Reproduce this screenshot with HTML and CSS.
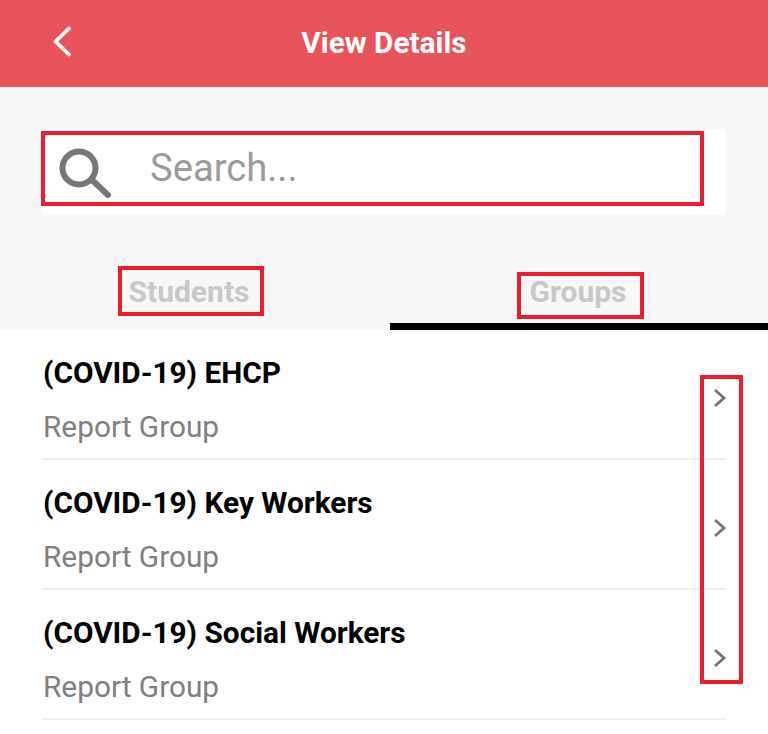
FILE: index.html
```html
<!DOCTYPE html>
<html lang="en">
<head>
<meta charset="utf-8">
<title>View Details</title>
<link rel="stylesheet" href="styles.css">
</head>
<body>
<div class="screen">
  <header class="topbar">
    <svg class="back" width="20" height="32" viewBox="0 0 20 32"><path d="M17 2.5 3.5 15.5 17 28.5" fill="none" stroke="#fff" stroke-width="3.8" stroke-linecap="round" stroke-linejoin="round"/></svg>
    <h1 class="title">View Details</h1>
  </header>
  <section class="search-wrap">
    <div class="search">
      <svg class="search-icon" width="54" height="52" viewBox="0 0 54 52"><circle cx="21" cy="21" r="16.5" fill="none" stroke="#777" stroke-width="6"/><path d="M34 33 50 48" fill="none" stroke="#777" stroke-width="6" stroke-linecap="round"/></svg>
      <span class="placeholder">Search...</span>
    </div>
  </section>
  <nav class="tabs">
    <div class="tab">Students</div>
    <div class="tab tab-active">Groups</div>
  </nav>
  <main class="list">
    <div class="item">
      <div class="item-text"><div class="item-name">(COVID-19) EHCP</div><div class="item-sub">Report Group</div></div>
      <svg class="chev" width="14" height="20" viewBox="0 0 14 20"><path d="M2 2 11 10 2 18" fill="none" stroke="#757575" stroke-width="2.8"/></svg>
    </div>
    <div class="item">
      <div class="item-text"><div class="item-name">(COVID-19) Key Workers</div><div class="item-sub">Report Group</div></div>
      <svg class="chev" width="14" height="20" viewBox="0 0 14 20"><path d="M2 2 11 10 2 18" fill="none" stroke="#757575" stroke-width="2.8"/></svg>
    </div>
    <div class="item">
      <div class="item-text"><div class="item-name">(COVID-19) Social Workers</div><div class="item-sub">Report Group</div></div>
      <svg class="chev" width="14" height="20" viewBox="0 0 14 20"><path d="M2 2 11 10 2 18" fill="none" stroke="#757575" stroke-width="2.8"/></svg>
    </div>
  </main>
  <div class="mark mark-search"></div>
  <div class="mark mark-students"></div>
  <div class="mark mark-groups"></div>
  <div class="mark mark-chevrons"></div>
</div>
</body>
</html>
```
FILE: styles.css
```css
* { box-sizing: border-box; }
html, body { margin: 0; padding: 0; }
body { font-family: Roboto, "Liberation Sans", sans-serif; background: #fff; }
.screen { position: relative; width: 768px; height: 734px; overflow: hidden; background: #fff; }

.topbar { height: 87px; background: #e8545b; display: flex; align-items: center; justify-content: center; position: relative; }
.back { position: absolute; left: 52px; top: 26px; }
.title { margin: 0; color: #fff; font-size: 29.8px; font-weight: 700; line-height: 34px; margin-top: -2px; }

.search-wrap { background: #f7f7f7; padding: 42px 42px 0; height: 128px; }
.search { width: 684px; height: 86px; background: #fff; display: flex; align-items: center; padding-left: 16px; }
.search-icon { flex: none; margin-top: 2px; }
.placeholder { margin-left: 38px; font-size: 38.2px; color: #9b9b9b; line-height: 42px; margin-top: -8px; }

.tabs { display: flex; height: 115px; background: #f7f7f7; }
.tab { flex: none; width: 390px; display: flex; justify-content: center; padding-top: 59px; padding-right: 12px; font-size: 30px; font-weight: 700; line-height: 36px; color: #c8c8c8; }
.tab-active { width: 378px; border-bottom: 7px solid #000; padding-right: 2px; padding-left: 0; }

.list { padding: 0 42px; }
.item { height: 130px; border-bottom: 2px solid #eee; display: flex; justify-content: space-between; }
.item-text { padding-top: 25px; padding-left: 1px; }
.item-name { font-size: 29.8px; font-weight: 700; line-height: 36px; color: #000; }
.item-sub { margin-top: 18px; font-size: 29.8px; line-height: 36px; color: #808080; }
.chev { margin-top: 58px; margin-right: -1px; flex: none; }

.mark { position: absolute; border: 4px solid #ed1c2e; }
.mark-search { left: 41px; top: 131px; width: 663px; height: 75px; }
.mark-students { left: 118px; top: 266px; width: 146px; height: 50px; }
.mark-groups { left: 517px; top: 272px; width: 127px; height: 47px; }
.mark-chevrons { left: 700px; top: 375px; width: 43px; height: 309px; }
```
